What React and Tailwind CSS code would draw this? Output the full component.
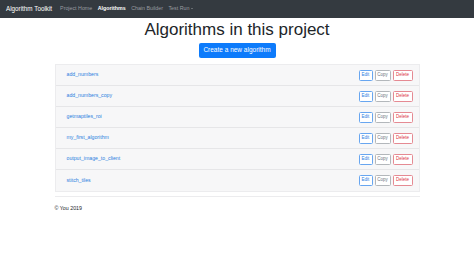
import React from 'react';

const algorithms = [
  'add_numbers',
  'add_numbers_copy',
  'getmaptiles_roi',
  'my_first_algorithm',
  'output_image_to_client',
  'stitch_tiles',
];

const font = { fontFamily: '"Liberation Sans", Arial, sans-serif' };

const NavBar = () => (
  <nav className="h-[18px] bg-[#343a40] flex items-center pl-[6px]">
    <span className="text-white text-[6.3px] leading-none">Algorithm Toolkit</span>
    <div className="flex items-center ml-[8px] gap-[5.5px] text-[5.3px] leading-none">
      <span className="text-[#9a9da0]">Project Home</span>
      <span className="text-white font-bold">Algorithms</span>
      <span className="text-[#9a9da0]">Chain Builder</span>
      <span className="text-[#9a9da0] flex items-center">
        Test Run
        <span className="ml-[1.5px] w-0 h-0 border-l-[1.6px] border-r-[1.6px] border-t-[1.8px] border-l-transparent border-r-transparent border-t-[#9a9da0]" />
      </span>
    </div>
  </nav>
);

const Row = ({ name, last }) => (
  <div
    className={`h-[21px] flex items-center justify-between pl-[11px] pr-[6px] bg-[#f7f7f8] ${
      last ? '' : 'border-b border-[#e6e6e8]'
    }`}
  >
    <span className="text-[#2a7fe0] text-[5.2px] leading-none">{name}</span>
    <div className="flex gap-[2px] text-[4.5px] leading-none">
      <span className="w-[14px] h-[11px] flex items-center justify-center border border-[#68a6f0] text-[#2a7fe0] rounded-[1.5px] bg-white">
        Edit
      </span>
      <span className="w-[16px] h-[11px] flex items-center justify-center border border-[#b3b7bb] text-[#6c757d] rounded-[1.5px] bg-white">
        Copy
      </span>
      <span className="w-[20px] h-[11px] flex items-center justify-center border border-[#e58a93] text-[#dc3545] rounded-[1.5px] bg-white">
        Delete
      </span>
    </div>
  </div>
);

export default function App() {
  return (
    <div className="w-[474px] h-[257px] bg-white overflow-hidden" style={font}>
      <NavBar />
      <div className="w-[365px] mx-auto">
        <h1 className="mt-[2px] text-center text-[17px] leading-[20px] text-[#212529] font-normal">
          Algorithms in this project
        </h1>
        <div className="flex justify-center mt-[3px]">
          <span className="w-[77px] h-[15px] flex items-center justify-center bg-[#0d7bfb] text-white text-[6.5px] leading-none rounded-[2px]">
            Create a new algorithm
          </span>
        </div>
        <div className="mt-[6px] border border-[#ececee]">
          {algorithms.map((a, i) => (
            <Row key={a} name={a} last={i === algorithms.length - 1} />
          ))}
        </div>
        <div className="mt-[4px] border-t border-[#ececee] pt-[8px] text-[5.3px] leading-[6px] text-[#212529]">
          © You 2019
        </div>
      </div>
    </div>
  );
}
